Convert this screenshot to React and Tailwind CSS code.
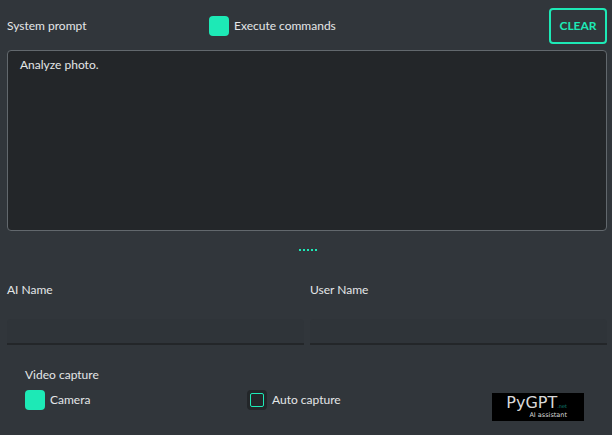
const Checkbox = ({ checked, label }) => (
  <div className="flex items-center gap-[5px]">
    {checked ? (
      <div className="w-5 h-5 rounded-[4px] bg-[#1de9b6]" />
    ) : (
      <div className="w-5 h-5 rounded-[4px] bg-[#232629] flex items-center justify-center">
        <div className="w-[14px] h-[14px] rounded-[2px] border border-[#1de9b6]" />
      </div>
    )}
    <span className="text-[12px] leading-5 text-[#e4e6e8]">{label}</span>
  </div>
);

const App = () => {
  return (
    <div className="w-[612px] h-[435px] overflow-hidden bg-[#31363b] font-['Lato',sans-serif] flex flex-col px-[5px] pt-2">
      <div className="flex items-center h-9 pl-[2px]">
        <span className="w-[202px] text-[12px] text-[#e4e6e8]">System prompt</span>
        <Checkbox checked label="Execute commands" />
        <button className="ml-auto w-[58px] h-9 rounded-[4px] border-2 border-[#1de9b6] text-[12px] font-bold text-[#1de9b6]">
          CLEAR
        </button>
      </div>

      <div className="mt-[6px] ml-[2px] h-[181px] rounded-[4px] border border-[#62686d] bg-[#232629] px-3 py-1 text-[12px] leading-5 text-[#e4e6e8]">
        Analyze photo.
      </div>

      <div className="mt-[18px] flex justify-center gap-[2px] pl-[3px]">
        {[0, 1, 2, 3, 4].map((i) => (
          <div key={i} className="w-[2px] h-[2px] bg-[#1de9b6]" />
        ))}
      </div>

      <div className="mt-[29px] ml-[2px] grid grid-cols-2 gap-[6px]">
        <div className="flex flex-col">
          <span className="text-[12px] leading-5 text-[#e4e6e8]">AI Name</span>
          <div className="mt-[19px] h-[26px] rounded-t-[4px] border-b-2 border-[#232629] bg-[#2f3439]" />
        </div>
        <div className="flex flex-col">
          <span className="text-[12px] leading-5 text-[#e4e6e8]">User Name</span>
          <div className="mt-[19px] h-[26px] rounded-t-[4px] border-b-2 border-[#232629] bg-[#2f3439]" />
        </div>
      </div>

      <div className="mt-[20px] pl-5 pr-[23px] flex flex-col">
        <span className="text-[12px] leading-5 text-[#e4e6e8]">Video capture</span>
        <div className="mt-[5px] flex items-start">
          <div className="w-[222px]">
            <Checkbox checked label="Camera" />
          </div>
          <Checkbox label="Auto capture" />
          <div className="ml-auto mt-[3px] w-[92px] h-[28px] bg-black flex flex-col items-end pr-[17px] font-['DejaVu_Sans',sans-serif]">
            <div className="flex items-baseline h-[18px] leading-[19px]">
              <span className="text-[16px] text-[#d8d8d8]">PyGPT</span>
              <span className="text-[5px] text-[#12857a]">.net</span>
            </div>
            <span className="text-[6.5px] leading-[8px] text-[#d8d8d8]">AI assistant</span>
          </div>
        </div>
      </div>
    </div>
  );
};

export default App;
